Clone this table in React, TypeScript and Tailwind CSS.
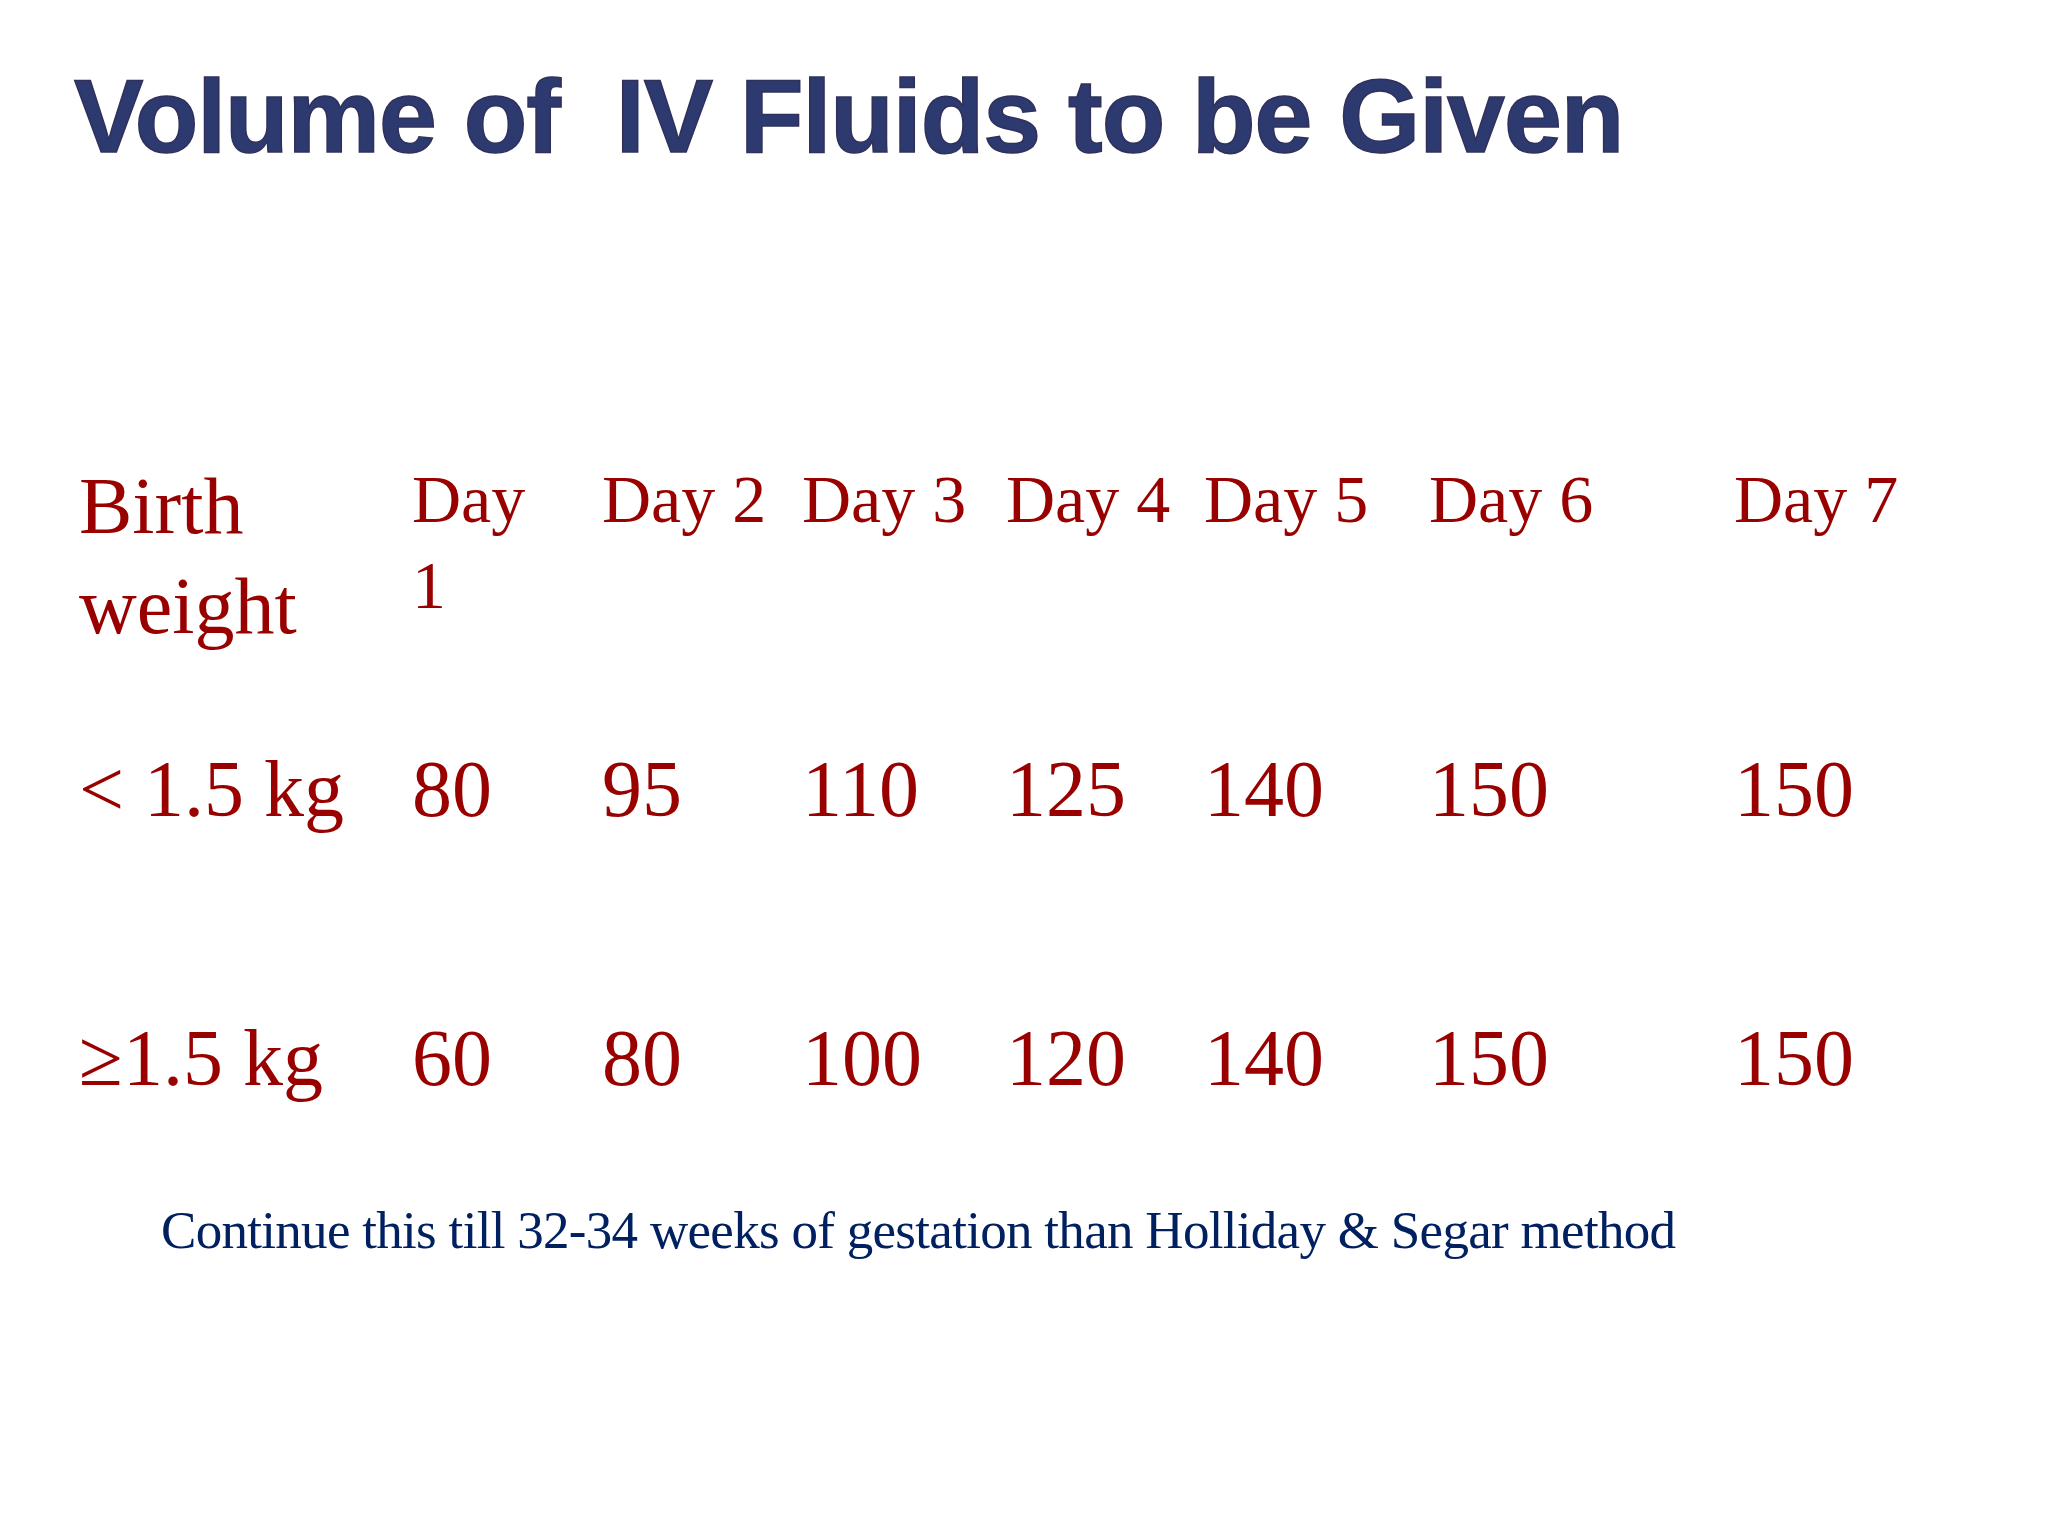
const header = ['Day 1', 'Day 2', 'Day 3', 'Day 4', 'Day 5', 'Day 6', 'Day 7'];

const rows = [
  { label: '< 1.5 kg', values: [80, 95, 110, 125, 140, 150, 150] },
  { label: '≥1.5 kg', values: [60, 80, 100, 120, 140, 150, 150] },
];

const cols = 'grid grid-cols-[333px_190px_200px_204px_198px_225px_305px_220px]';

export default function App() {
  return (
    <div className="w-[2048px] h-[1536px] bg-white overflow-hidden">
      <h1 className="pt-[64px] pl-[74px] text-[104px] leading-[104px] font-bold tracking-[-1px] text-[#2c3a70] font-['Liberation_Sans',Arial,sans-serif] [-webkit-text-stroke:1.5px_#30305a]">
        Volume of&nbsp; IV Fluids to be Given
      </h1>

      <div className="mt-[288px] pl-[79px] text-[#990000] font-['Liberation_Serif','Times_New_Roman',serif]">
        {/* header row */}
        <div className={`${cols} h-[283px]`}>
          <div className="text-[80px] leading-[100px]">Birth weight</div>
          {header.map((h, i) => (
            <div key={h} className="text-[68px] leading-[86px] whitespace-nowrap">
              {i === 0 ? (
                <>
                  Day
                  <br />1
                </>
              ) : (
                h
              )}
            </div>
          ))}
        </div>

        {rows.map((r, i) => (
          <div key={r.label} className={`${cols} ${i === 0 ? 'h-[269px]' : 'h-[100px]'} text-[80px] leading-[100px] whitespace-nowrap`}>
            <div>{r.label}</div>
            {r.values.map((v, j) => (
              <div key={j}>{v}</div>
            ))}
          </div>
        ))}
      </div>

      <p className="mt-[92px] pl-[161px] text-[53px] leading-[60px] tracking-[-0.7px] text-[#002060] font-['Liberation_Serif','Times_New_Roman',serif]">
        Continue this till 32-34 weeks of gestation than Holliday &amp; Segar method
      </p>
    </div>
  );
}
